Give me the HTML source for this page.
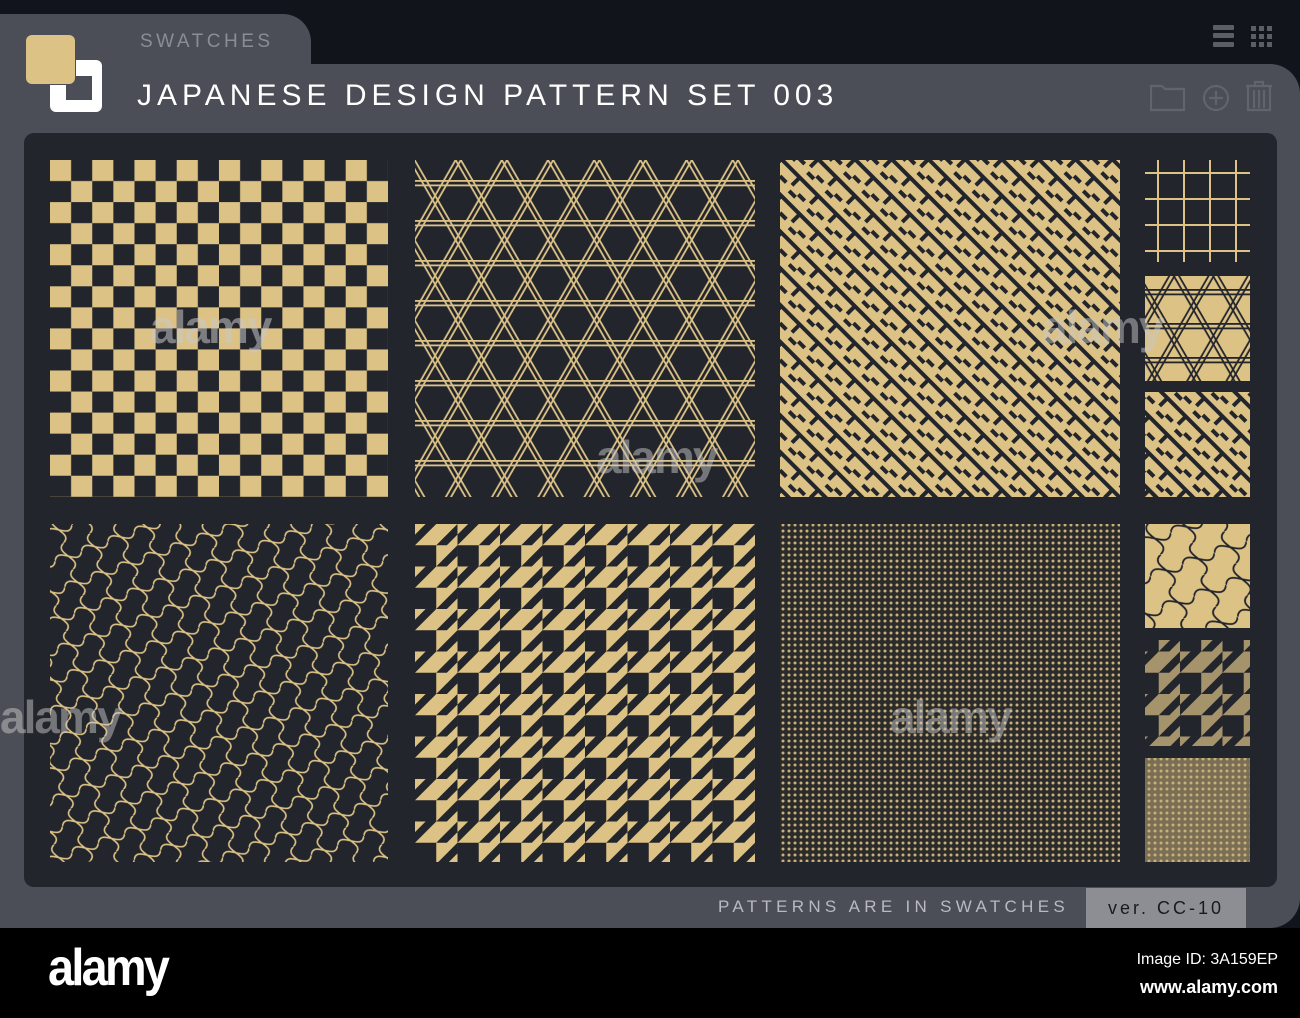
<!DOCTYPE html>
<html><head><meta charset="utf-8"><style>
html,body{margin:0;padding:0;width:1300px;height:1018px;overflow:hidden;background:#12141b;font-family:"Liberation Sans",sans-serif}
.abs{position:absolute}
</style></head><body>
<div class="abs" style="left:0;top:928px;width:1300px;height:90px;background:#000"></div>
<div class="abs" style="left:0;top:14px;width:311px;height:80px;background:#4b4e57;border-radius:0 28px 0 0"></div>
<div class="abs" style="left:0;top:64px;width:1300px;height:864px;background:#4b4e57;border-radius:0 30px 30px 0"></div>
<div class="abs" style="left:24px;top:133px;width:1253px;height:754px;background:#23252d;border-radius:10px"></div>
<div class="abs" style="left:50px;top:60px;width:52px;height:52px;background:#fff;border-radius:6px"></div>
<div class="abs" style="left:66px;top:76px;width:26px;height:24px;background:#4b4e57"></div>
<div class="abs" style="left:26px;top:35px;width:49px;height:49px;background:#dcc285;border-radius:6px;box-shadow:0 0 0 1px #4b4e57"></div>
<div class="abs" style="left:140px;top:31px;font-size:19px;letter-spacing:3.5px;color:#8b8d94">SWATCHES</div>
<div class="abs" style="left:137px;top:79px;font-size:30px;letter-spacing:5px;color:#fff">JAPANESE DESIGN PATTERN SET 003</div>
<svg class="abs" style="left:1150px;top:20px" width="130" height="100" viewBox="1150 20 130 100">
<g fill="#5c5e66"><rect x="1213" y="25" width="21" height="5" rx="1"/><rect x="1213" y="33" width="21" height="5" rx="1"/><rect x="1213" y="42" width="21" height="5" rx="1"/>
<rect x="1251" y="26" width="5" height="5"/><rect x="1259" y="26" width="5" height="5"/><rect x="1267" y="26" width="5" height="5"/>
<rect x="1251" y="34" width="5" height="5"/><rect x="1259" y="34" width="5" height="5"/><rect x="1267" y="34" width="5" height="5"/>
<rect x="1251" y="42" width="5" height="5"/><rect x="1259" y="42" width="5" height="5"/><rect x="1267" y="42" width="5" height="5"/></g>
<g fill="none" stroke="#62646c" stroke-width="2.2"><path d="M1151 86h11l3 3h19v21h-33z"/><circle cx="1216" cy="98" r="12"/><path d="M1216 91v14M1209 98h14"/>
<path d="M1246 86h26M1255 86v-4h8v4M1248 86v24h22v-24M1254 90v18M1259 90v18M1264 90v18"/></g></svg>
<svg class="abs" style="left:0;top:0" width="1300" height="928">
<defs>
<pattern id="chk" x="50" y="160" width="42.25" height="42.1" patternUnits="userSpaceOnUse"><rect width="42.25" height="42.1" fill="#dcc285"/><rect width="21.1" height="21.05" fill="#23252d" x="21.1"/><rect width="21.1" height="21.05" fill="#23252d" y="21.05"/></pattern>
<pattern id="kl" width="40" height="40" patternUnits="userSpaceOnUse" patternTransform="translate(0,20)"><rect x="0" y="0" width="40" height="1.8" fill="#dcc285"/><rect x="0" y="4.5" width="40" height="1.8" fill="#dcc285"/></pattern>
<pattern id="kl60" width="40" height="40" patternUnits="userSpaceOnUse" patternTransform="rotate(60)"><rect x="0" y="0" width="40" height="1.8" fill="#dcc285"/><rect x="0" y="4.5" width="40" height="1.8" fill="#dcc285"/></pattern>
<pattern id="kl120" width="40" height="40" patternUnits="userSpaceOnUse" patternTransform="rotate(120)"><rect x="0" y="0" width="40" height="1.8" fill="#dcc285"/><rect x="0" y="4.5" width="40" height="1.8" fill="#dcc285"/></pattern>
<pattern id="dk" width="34" height="34" patternUnits="userSpaceOnUse" patternTransform="translate(0,17)"><rect width="34" height="1.8" fill="#23252d"/><rect y="4.5" width="34" height="1.8" fill="#23252d"/></pattern>
<pattern id="dk60" width="34" height="34" patternUnits="userSpaceOnUse" patternTransform="rotate(60)"><rect width="34" height="1.8" fill="#23252d"/><rect y="4.5" width="34" height="1.8" fill="#23252d"/></pattern>
<pattern id="dk120" width="34" height="34" patternUnits="userSpaceOnUse" patternTransform="rotate(120)"><rect width="34" height="1.8" fill="#23252d"/><rect y="4.5" width="34" height="1.8" fill="#23252d"/></pattern>
<pattern id="say" width="26" height="26" patternUnits="userSpaceOnUse" patternTransform="rotate(45)"><rect width="26" height="26" fill="#dcc285"/><rect x="0" y="0" width="26" height="4" fill="#23252d"/><rect x="0" y="13" width="9" height="4" fill="#23252d"/><rect x="13" y="4" width="4" height="9" fill="#23252d"/><rect x="17" y="17" width="9" height="4" fill="#23252d"/></pattern>
<pattern id="wav" width="28" height="28" patternUnits="userSpaceOnUse" patternTransform="rotate(-20)"><rect width="28" height="28" fill="#23252d"/><path d="M0 14 C7 0,21 28,28 14 M14 0 C0 7,28 21,14 28" fill="none" stroke="#dcc285" stroke-width="1.6"/></pattern>
<pattern id="wav2" width="34" height="34" patternUnits="userSpaceOnUse" patternTransform="rotate(-20)"><rect width="34" height="34" fill="#dcc285"/><path d="M0 17 C8 0,26 34,34 17 M17 0 C0 8,34 26,17 34" fill="none" stroke="#23252d" stroke-width="1.8"/></pattern>
<pattern id="hou" x="415" y="524" width="42.5" height="42.5" patternUnits="userSpaceOnUse"><rect width="42.5" height="42.5" fill="#dcc285"/><g transform="scale(5.31)" fill="#23252d"><rect x="0" y="4" width="4" height="4"/><polygon points="4,4 8,0 8,2 6,4"/><polygon points="0,4 4,0 2,0 0,2"/><polygon points="4,8 8,4 8,6 6,8"/><polygon points="0,8 0,6 -2,8"/></g></pattern>
<pattern id="dot" width="6" height="6" patternUnits="userSpaceOnUse"><rect width="6" height="6" fill="#2b2b2c"/><circle cx="3" cy="3" r="1.5" fill="#c8b07a"/></pattern>
<pattern id="grid" x="1145" y="160" width="26" height="26" patternUnits="userSpaceOnUse"><rect width="26" height="26" fill="#23252d"/><rect x="12" width="2" height="26" fill="#dcc285"/><rect y="12" width="26" height="2" fill="#dcc285"/></pattern>
</defs>
<rect x="50" y="160" width="338" height="337" fill="url(#chk)"/>
<rect x="415" y="160" width="340" height="337" fill="#23252d"/>
<rect x="415" y="160" width="340" height="337" fill="url(#kl)"/>
<rect x="415" y="160" width="340" height="337" fill="url(#kl60)"/>
<rect x="415" y="160" width="340" height="337" fill="url(#kl120)"/>
<rect x="780" y="160" width="340" height="337" fill="url(#say)"/>
<rect x="1145" y="160" width="105" height="102" fill="url(#grid)"/>
<rect x="1145" y="276" width="105" height="105" fill="#dcc285"/>
<rect x="1145" y="276" width="105" height="105" fill="url(#dk)"/>
<rect x="1145" y="276" width="105" height="105" fill="url(#dk60)"/>
<rect x="1145" y="276" width="105" height="105" fill="url(#dk120)"/>
<rect x="1145" y="392" width="105" height="105" fill="url(#say)"/>
<rect x="50" y="524" width="338" height="338" fill="url(#wav)"/>
<rect x="415" y="524" width="340" height="338" fill="url(#hou)"/>
<rect x="780" y="524" width="340" height="338" fill="url(#dot)"/>
<rect x="1145" y="524" width="105" height="104" fill="url(#wav2)"/>
<rect x="1145" y="640" width="105" height="106" fill="url(#hou)" opacity="0.7"/>
<rect x="1145" y="758" width="105" height="104" fill="url(#dot)" opacity="0.9"/>
<rect x="1145" y="758" width="105" height="104" fill="#dcc285" opacity="0.45"/>
</svg>
<div class="abs" style="left:150px;top:300px;font-size:46px;font-weight:bold;color:rgba(200,200,200,0.55);letter-spacing:-2px">alamy</div>
<div class="abs" style="left:596px;top:430px;font-size:46px;font-weight:bold;color:rgba(200,200,200,0.5);letter-spacing:-2px">alamy</div>
<div class="abs" style="left:1042px;top:300px;font-size:46px;font-weight:bold;color:rgba(200,200,200,0.5);letter-spacing:-2px">alamy</div>
<div class="abs" style="left:0;top:690px;font-size:46px;font-weight:bold;color:rgba(200,200,200,0.5);letter-spacing:-2px">alamy</div>
<div class="abs" style="left:890px;top:690px;font-size:46px;font-weight:bold;color:rgba(200,200,200,0.5);letter-spacing:-2px">alamy</div>
<div class="abs" style="left:718px;top:897px;font-size:17px;letter-spacing:4.3px;color:#b8bac0">PATTERNS ARE IN SWATCHES</div>
<div class="abs" style="left:1086px;top:888px;width:160px;height:40px;background:#8d8e94;color:#1a1a1e;font-size:18px;letter-spacing:3px;line-height:40px;text-align:center">ver. CC-10</div>
<div class="abs" style="left:48px;top:938px;font-size:52px;font-weight:bold;color:#fff;letter-spacing:-3px;transform:scaleX(0.9);transform-origin:left">alamy</div>
<div class="abs" style="left:1068px;top:951px;font-size:16px;color:#fff;width:210px;text-align:right">Image ID: 3A159EP</div>
<div class="abs" style="left:1068px;top:977px;font-size:18px;font-weight:bold;color:#fff;width:210px;text-align:right">www.alamy.com</div>
</body></html>
